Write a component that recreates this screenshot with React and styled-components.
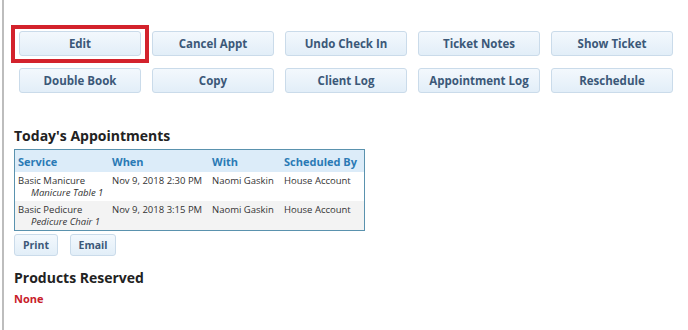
import React from "react";
import styled, { createGlobalStyle } from "styled-components";

const Global = createGlobalStyle`
  html, body { margin: 0; padding: 0; background: #fff; }
  body { font-family: "Open Sans", "Noto Sans", sans-serif; }
`;

const Page = styled.div`
  margin-left: 2px;
  border-left: 2px solid #bdbdbd;
  min-height: 330px;
  box-sizing: border-box;
  padding: 31px 0 0 10px;
`;

const ActionGrid = styled.div`
  display: grid;
  grid-template-columns: repeat(5, 122px);
  column-gap: 11px;
  row-gap: 12px;
  margin-left: 5px;
`;

const Button = styled.button`
  position: relative;
  box-sizing: border-box;
  height: ${(p) => (p.$small ? 22 : 25)}px;
  width: ${(p) => (p.$w ? `${p.$w}px` : "auto")};
  padding: 0;
  border: 1px solid #cadbea;
  border-radius: 3px;
  background: linear-gradient(#f3f8fd, #e2eef8);
  color: #3b5878;
  font-family: "Open Sans", sans-serif;
  font-weight: 700;
  font-size: ${(p) => (p.$small ? 10.5 : 11.5)}px;
  cursor: pointer;
  ${(p) =>
    p.$highlight &&
    `
    &::after {
      content: "";
      position: absolute;
      left: -9px; right: -9px; top: -7px; bottom: -8px;
      border: 4px solid #d3222c;
      pointer-events: none;
    }
  `}
`;

const Heading = styled.h2`
  margin: ${(p) => p.$mt}px 0 0 0;
  font-size: 14px;
  font-weight: 700;
  color: #222;
  line-height: 20px;
`;

const Table = styled.table`
  margin-top: 3px;
  width: 351px;
  table-layout: fixed;
  border-collapse: collapse;
  border: 1px solid #5a92ae;
  font-size: 9.5px;
  color: #333;
  white-space: nowrap;
`;

const HeadCell = styled.th`
  text-align: left;
  background: #dcecf9;
  color: #2a7ab5;
  font-weight: 700;
  font-size: 11px;
  height: 22px;
  padding: 0 3px;
  width: ${(p) => (p.$w ? `${p.$w}px` : "auto")};
`;

const Row = styled.tr`
  background: ${(p) => (p.$alt ? "#f3f3f3" : "#fff")};
`;

const Cell = styled.td`
  vertical-align: top;
  padding: 3px 3px 2px 3px;
  line-height: 12px;
  height: 24px;
`;

const Sub = styled.div`
  font-style: italic;
  padding-left: 13px;
`;

const ButtonRow = styled.div`
  display: flex;
  gap: 12px;
  margin-top: 3px;
`;

const None = styled.div`
  margin-top: 3px;
  color: #c8202a;
  font-weight: 700;
  font-size: 11px;
`;

const actions = [
  "Edit",
  "Cancel Appt",
  "Undo Check In",
  "Ticket Notes",
  "Show Ticket",
  "Double Book",
  "Copy",
  "Client Log",
  "Appointment Log",
  "Reschedule",
];

const appts = [
  { service: "Basic Manicure", station: "Manicure Table 1", when: "Nov 9, 2018 2:30 PM" },
  { service: "Basic Pedicure", station: "Pedicure Chair 1", when: "Nov 9, 2018 3:15 PM" },
];

export default function App() {
  return (
    <>
      <Global />
      <Page>
        <ActionGrid>
          {actions.map((a, i) => (
            <Button key={a} $highlight={i === 0}>
              {a}
            </Button>
          ))}
        </ActionGrid>
        <Heading $mt={33}>Today's Appointments</Heading>
        <Table>
          <thead>
            <tr>
              <HeadCell $w={88}>Service</HeadCell>
              <HeadCell $w={94}>When</HeadCell>
              <HeadCell $w={66}>With</HeadCell>
              <HeadCell>Scheduled By</HeadCell>
            </tr>
          </thead>
          <tbody>
            {appts.map((r, i) => (
              <Row key={r.service} $alt={i % 2 === 1}>
                <Cell>
                  {r.service}
                  <Sub>{r.station}</Sub>
                </Cell>
                <Cell>{r.when}</Cell>
                <Cell>Naomi Gaskin</Cell>
                <Cell>House Account</Cell>
              </Row>
            ))}
          </tbody>
        </Table>
        <ButtonRow>
          <Button $small $w={44}>Print</Button>
          <Button $small $w={46}>Email</Button>
        </ButtonRow>
        <Heading $mt={12}>Products Reserved</Heading>
        <None>None</None>
      </Page>
    </>
  );
}
